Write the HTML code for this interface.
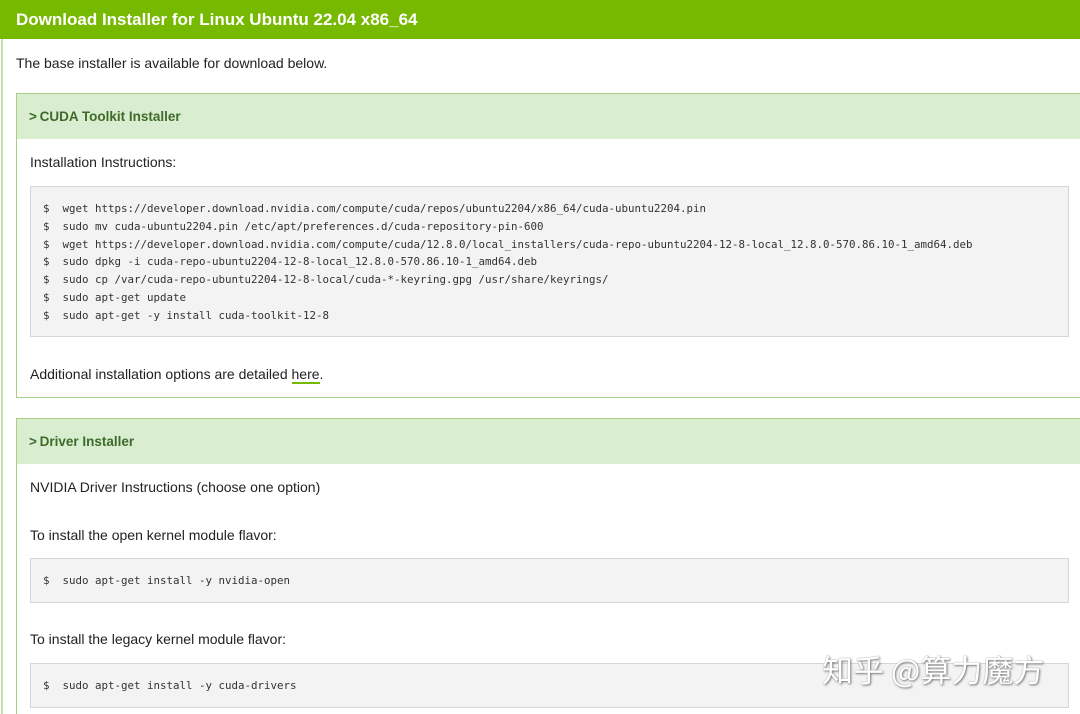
<!DOCTYPE html>
<html style="margin:0;width:1080px;height:714px;overflow:hidden"><head><meta charset="utf-8"><style>
body{margin:0;width:1080px;height:714px;overflow:hidden;background:#fff;font-family:"Liberation Sans",sans-serif;color:#222;position:relative}
.hdr{position:absolute;left:0;top:0;width:1080px;height:39px;background:#76b900;color:#fff;font-weight:bold;font-size:17px;line-height:39px;padding-left:16px;box-sizing:border-box}
.outer{position:absolute;left:1px;top:39px;width:2px;height:680px;background:#c8e0a8}
.t{position:absolute;font-size:14px;white-space:nowrap}
.panel{position:absolute;left:16px;width:1080px;border:1px solid #a8cf86;box-sizing:border-box;overflow:hidden}
.ph{height:45px;background:#d9edd0;color:#3e6b2a;font-weight:bold;font-size:13.5px;line-height:46px;padding-left:12px}
.code{position:absolute;left:30px;width:1039px;background:#f3f3f3;border:1px solid #d6d6d6;box-sizing:border-box;font-family:"DejaVu Sans Mono","Liberation Mono",monospace;font-size:10.8px;color:#333;padding-left:12px;white-space:pre;line-height:17.8px}
.wm{position:absolute;left:822px;top:649px;font-family:"Noto Sans CJK SC",sans-serif;font-size:31px;line-height:40px;color:#fff;text-shadow:1px 1px 2px #777,0 0 1px #888;letter-spacing:0px}
</style></head><body>
<div class="hdr">Download Installer for Linux Ubuntu 22.04 x86_64</div>
<div class="outer"></div>
<div class="t" style="left:16px;top:55px">The base installer is available for download below.</div>
<div class="panel" style="top:93px;height:305px"><div class="ph">&gt;&thinsp;CUDA Toolkit Installer</div></div>
<div class="t" style="left:30px;top:154px">Installation Instructions:</div>
<div class="code" style="top:186px;height:151px;padding-top:13px">$  wget https://developer.download.nvidia.com/compute/cuda/repos/ubuntu2204/x86_64/cuda-ubuntu2204.pin
$  sudo mv cuda-ubuntu2204.pin /etc/apt/preferences.d/cuda-repository-pin-600
$  wget https://developer.download.nvidia.com/compute/cuda/12.8.0/local_installers/cuda-repo-ubuntu2204-12-8-local_12.8.0-570.86.10-1_amd64.deb
$  sudo dpkg -i cuda-repo-ubuntu2204-12-8-local_12.8.0-570.86.10-1_amd64.deb
$  sudo cp /var/cuda-repo-ubuntu2204-12-8-local/cuda-*-keyring.gpg /usr/share/keyrings/
$  sudo apt-get update
$  sudo apt-get -y install cuda-toolkit-12-8</div>
<div class="t" style="left:30px;top:366px">Additional installation options are detailed <span style="border-bottom:2px solid #76b900">here</span>.</div>
<div class="panel" style="top:418px;height:320px"><div class="ph">&gt;&thinsp;Driver Installer</div></div>
<div class="t" style="left:30px;top:479px">NVIDIA Driver Instructions (choose one option)</div>
<div class="t" style="left:30px;top:527px">To install the open kernel module flavor:</div>
<div class="code" style="top:558px;height:45px;line-height:43px">$  sudo apt-get install -y nvidia-open</div>
<div class="t" style="left:30px;top:631px">To install the legacy kernel module flavor:</div>
<div class="code" style="top:663px;height:45px;line-height:43px">$  sudo apt-get install -y cuda-drivers</div>
<div class="wm">知乎 @算力魔方</div>
</body></html>
